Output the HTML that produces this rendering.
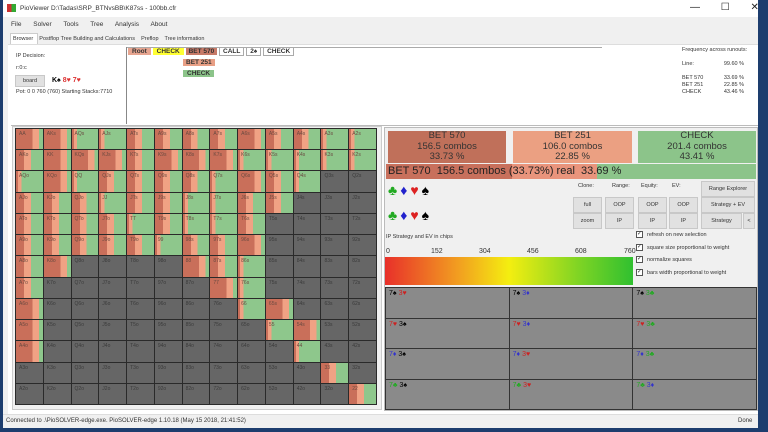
<!DOCTYPE html>
<html><head><meta charset="utf-8"><style>
*{margin:0;padding:0;box-sizing:border-box}
body{width:768px;height:432px;overflow:hidden;background:#1d3d6e;font-family:"Liberation Sans",sans-serif;position:relative}
.a{position:absolute}
#win{left:3px;top:0;width:755px;height:428px;background:#f0f0f0}
.t{font-size:6px;color:#333;white-space:nowrap}
#grid{left:15px;top:128px;width:362px;height:277px;display:grid;grid-template-columns:repeat(13,1fr);grid-template-rows:repeat(13,1fr);background:#2a2a2a;gap:1px;border:1px solid #2a2a2a}
.c{font-size:5px;color:#6a4a40;padding:2px 0 0 3px;overflow:hidden}
.R{background:linear-gradient(90deg,#c96f5a 0 62%,#f0a284 62% 86%,#8ec78c 86%)}
.M{background:linear-gradient(90deg,#c96f5a 0 30%,#f0a284 30% 55%,#8ec78c 55%)}
.G{background:linear-gradient(90deg,#c96f5a 0 8%,#f0a284 8% 20%,#8ec78c 20%)}
.X{background:#666;color:#3a3a3a}
.box{text-align:center;font-size:9.5px;line-height:10.5px;color:#333;padding-top:0}
.btn{background:#e1e1e1;border:1px solid #c8c8c8;font-size:5.5px;color:#333;text-align:center;line-height:14px}
.cb{font-size:5.5px;color:#333;white-space:nowrap}
.cb i{display:inline-block;width:7px;height:7px;border:1px solid #555;background:#fff;vertical-align:middle;margin-right:4px;font-style:normal;font-size:6px;line-height:5px;text-align:center}
.bc{background:#8a8a8a;font-size:7px;padding:2px 0 0 3px}
</style></head><body>
<div id="win" class="a"></div>
<div class="a" style="left:3px;top:0;width:755px;height:17px;background:#fff"></div>
<div class="a" style="left:7px;top:4px;width:9px;height:8px;background:linear-gradient(90deg,#c33 0 50%,#3a3 50%)"></div>
<div class="a t" style="left:20px;top:5px;font-size:6.5px">PioViewer D:\Tadas\SRP_BTNvsBB\K87ss - 100bb.cfr</div>
<div class="a t" style="left:690px;top:2px;font-size:10px;color:#222;word-spacing:18px">&#8212; &#9744; &#10005;</div>
<div class="a t" style="left:11px;top:21px;font-size:6.5px;word-spacing:10px">File Solver Tools Tree Analysis About</div>
<div class="a" style="left:10px;top:33px;width:28px;height:12px;background:#fff;border:1px solid #ccc;border-bottom:none"></div>
<div class="a t" style="left:13px;top:36px;font-size:5.5px">Browser &nbsp;&nbsp; Postflop Tree Building and Calculations &nbsp;&nbsp; Preflop &nbsp;&nbsp; Tree information</div>
<div class="a" style="left:8px;top:44px;width:750px;height:370px;background:#fff;border-top:1px solid #ddd"></div>
<div class="a t" style="left:16px;top:53px;font-size:5.5px">IP Decision:</div>
<div class="a t" style="left:16px;top:65px;font-size:5.5px">r:0:c</div>
<div class="a btn" style="left:15px;top:75px;width:30px;height:12px;line-height:10px">board</div>
<div class="a t" style="left:52px;top:77px;font-size:7px;font-weight:bold;color:#000">K♠ <span style="color:#d33">8♥ 7♥</span></div>
<div class="a t" style="left:16px;top:89px;font-size:5.5px">Pot: 0 0 760 (760) Starting Stacks:7710</div>
<div class="a" style="left:126px;top:47px;width:1px;height:77px;background:#888"></div>
<div class="a" style="left:127px;top:47px;width:475px;height:1px;background:#aaa"></div>
<div class="a t" style="left:128px;top:48px;font-size:6.5px;font-weight:bold">
<span style="background:#e7a590;padding:0 4px">Root</span> <span style="background:#ffff33;padding:0 4px">CHECK</span> <span style="background:#c77a68;padding:0 3px">BET 570</span> <span style="background:#fff;border:1px solid #aaa;padding:0 3px">CALL</span> <span style="border:1px solid #aaa;padding:0 3px">2♠</span> <span style="border:1px solid #aaa;padding:0 3px">CHECK</span></div>
<div class="a t" style="left:183px;top:59px;font-size:6.5px;font-weight:bold;background:#e89f85;padding:0 3px">BET 251</div>
<div class="a t" style="left:183px;top:70px;font-size:6.5px;font-weight:bold;background:#8cc48a;padding:0 4px">CHECK</div>
<div class="a t" style="left:682px;top:47px;font-size:5.5px">Frequency across runouts:</div>
<div class="a t" style="left:682px;top:61px;font-size:5.5px;width:80px">Line:<span style="float:right;margin-right:18px">99.60 %</span></div>
<div class="a t" style="left:682px;top:75px;font-size:5.5px;line-height:7px;width:80px">BET 570<span style="float:right;margin-right:18px">33.69 %</span><br>BET 251<span style="float:right;margin-right:18px">22.85 %</span><br>CHECK<span style="float:right;margin-right:18px">43.46 %</span></div>
<div class="a" style="left:11px;top:125px;width:747px;height:1px;background:#bbb"></div>
<div class="a" style="left:12px;top:126px;width:370px;height:284px;background:#f0f0f0;border:1px solid #ccc"></div>
<div id="grid" class="a">
<div class="c R">AA</div><div class="c R">AKs</div><div class="c G">AQs</div><div class="c G">AJs</div><div class="c M">ATs</div><div class="c M">A9s</div><div class="c M">A8s</div><div class="c M">A7s</div><div class="c R">A6s</div><div class="c M">A5s</div><div class="c M">A4s</div><div class="c G">A3s</div><div class="c G">A2s</div>
<div class="c M">AKo</div><div class="c R">KK</div><div class="c R">KQs</div><div class="c R">KJs</div><div class="c M">KTs</div><div class="c R">K9s</div><div class="c R">K8s</div><div class="c R">K7s</div><div class="c G">K6s</div><div class="c G">K5s</div><div class="c G">K4s</div><div class="c G">K3s</div><div class="c G">K2s</div>
<div class="c G">AQo</div><div class="c R">KQo</div><div class="c G">QQ</div><div class="c M">QJs</div><div class="c M">QTs</div><div class="c M">Q9s</div><div class="c M">Q8s</div><div class="c G">Q7s</div><div class="c R">Q6s</div><div class="c M">Q5s</div><div class="c G">Q4s</div><div class="c X">Q3s</div><div class="c X">Q2s</div>
<div class="c M">AJo</div><div class="c M">KJo</div><div class="c M">QJo</div><div class="c G">JJ</div><div class="c M">JTs</div><div class="c M">J9s</div><div class="c G">J8s</div><div class="c G">J7s</div><div class="c M">J6s</div><div class="c M">J5s</div><div class="c X">J4s</div><div class="c X">J3s</div><div class="c X">J2s</div>
<div class="c M">ATo</div><div class="c M">KTo</div><div class="c M">QTo</div><div class="c M">JTo</div><div class="c G">TT</div><div class="c M">T9s</div><div class="c G">T8s</div><div class="c G">T7s</div><div class="c M">T6s</div><div class="c X">T5s</div><div class="c X">T4s</div><div class="c X">T3s</div><div class="c X">T2s</div>
<div class="c M">A9o</div><div class="c M">K9o</div><div class="c M">Q9o</div><div class="c M">J9o</div><div class="c M">T9o</div><div class="c G">99</div><div class="c M">98s</div><div class="c M">97s</div><div class="c R">96s</div><div class="c X">95s</div><div class="c X">94s</div><div class="c X">93s</div><div class="c X">92s</div>
<div class="c M">A8o</div><div class="c R">K8o</div><div class="c X">Q8o</div><div class="c X">J8o</div><div class="c X">T8o</div><div class="c X">98o</div><div class="c R">88</div><div class="c M">87s</div><div class="c G">86s</div><div class="c X">85s</div><div class="c X">84s</div><div class="c X">83s</div><div class="c X">82s</div>
<div class="c M">A7o</div><div class="c X">K7o</div><div class="c X">Q7o</div><div class="c X">J7o</div><div class="c X">T7o</div><div class="c X">97o</div><div class="c X">87o</div><div class="c R">77</div><div class="c G">76s</div><div class="c X">75s</div><div class="c X">74s</div><div class="c X">73s</div><div class="c X">72s</div>
<div class="c R">A6o</div><div class="c X">K6o</div><div class="c X">Q6o</div><div class="c X">J6o</div><div class="c X">T6o</div><div class="c X">96o</div><div class="c X">86o</div><div class="c X">76o</div><div class="c G">66</div><div class="c R">65s</div><div class="c X">64s</div><div class="c X">63s</div><div class="c X">62s</div>
<div class="c R">A5o</div><div class="c X">K5o</div><div class="c X">Q5o</div><div class="c X">J5o</div><div class="c X">T5o</div><div class="c X">95o</div><div class="c X">85o</div><div class="c X">75o</div><div class="c X">65o</div><div class="c G">55</div><div class="c R">54s</div><div class="c X">53s</div><div class="c X">52s</div>
<div class="c R">A4o</div><div class="c X">K4o</div><div class="c X">Q4o</div><div class="c X">J4o</div><div class="c X">T4o</div><div class="c X">94o</div><div class="c X">84o</div><div class="c X">74o</div><div class="c X">64o</div><div class="c X">54o</div><div class="c G">44</div><div class="c X">43s</div><div class="c X">42s</div>
<div class="c X">A3o</div><div class="c X">K3o</div><div class="c X">Q3o</div><div class="c X">J3o</div><div class="c X">T3o</div><div class="c X">93o</div><div class="c X">83o</div><div class="c X">73o</div><div class="c X">63o</div><div class="c X">53o</div><div class="c X">43o</div><div class="c M">33</div><div class="c X">32s</div>
<div class="c X">A2o</div><div class="c X">K2o</div><div class="c X">Q2o</div><div class="c X">J2o</div><div class="c X">T2o</div><div class="c X">92o</div><div class="c X">82o</div><div class="c X">72o</div><div class="c X">62o</div><div class="c X">52o</div><div class="c X">42o</div><div class="c X">32o</div><div class="c M">22</div>
</div>
<div class="a" style="left:384px;top:127px;width:374px;height:284px;background:#f0f0f0;border:1px solid #bbb"></div>
<div class="a box" style="left:388px;top:131px;width:118px;height:32px;background:#c0705a">BET 570<br>156.5 combos<br>33.73 %</div>
<div class="a box" style="left:513px;top:131px;width:119px;height:32px;background:#eba082">BET 251<br>106.0 combos<br>22.85 %</div>
<div class="a box" style="left:638px;top:131px;width:118px;height:32px;background:#8cc48a">CHECK<br>201.4 combos<br>43.41 %</div>
<div class="a" style="left:386px;top:164px;width:370px;height:15px;background:linear-gradient(90deg,#c8705c 0 34%,#e9947c 34% 57%,#8cc48a 57%)"></div>
<div class="a t" style="left:388px;top:165px;font-size:11px;color:#222">BET 570 &nbsp;156.5 combos (33.73%) real &nbsp;33.69 %</div>
<div class="a t" style="left:388px;top:182px;font-size:14px;letter-spacing:3px"><span style="color:#2a2">♣</span><span style="color:#22c">♦</span><span style="color:#d22">♥</span><span style="color:#000">♠</span></div>
<div class="a t" style="left:388px;top:207px;font-size:14px;letter-spacing:3px"><span style="color:#2a2">♣</span><span style="color:#22c">♦</span><span style="color:#d22">♥</span><span style="color:#000">♠</span></div>
<div class="a t" style="left:578px;top:183px;font-size:5.5px">Clone:</div>
<div class="a t" style="left:612px;top:183px;font-size:5.5px">Range:</div>
<div class="a t" style="left:641px;top:183px;font-size:5.5px">Equity:</div>
<div class="a t" style="left:672px;top:183px;font-size:5.5px">EV:</div>
<div class="a btn" style="left:573px;top:197px;width:29px;height:16px">full</div>
<div class="a btn" style="left:605px;top:197px;width:29px;height:16px">OOP</div>
<div class="a btn" style="left:638px;top:197px;width:29px;height:16px">OOP</div>
<div class="a btn" style="left:669px;top:197px;width:29px;height:16px">OOP</div>
<div class="a btn" style="left:573px;top:213px;width:29px;height:16px">zoom</div>
<div class="a btn" style="left:605px;top:213px;width:29px;height:16px">IP</div>
<div class="a btn" style="left:638px;top:213px;width:29px;height:16px">IP</div>
<div class="a btn" style="left:669px;top:213px;width:29px;height:16px">IP</div>
<div class="a btn" style="left:701px;top:181px;width:54px;height:16px">Range Explorer</div>
<div class="a btn" style="left:701px;top:197px;width:54px;height:16px">Strategy + EV</div>
<div class="a btn" style="left:701px;top:213px;width:41px;height:16px">Strategy</div>
<div class="a btn" style="left:743px;top:213px;width:12px;height:16px">&lt;</div>
<div class="a t" style="left:386px;top:234px;font-size:5.5px">IP Strategy and EV in chips</div>
<div class="a t" style="left:386px;top:248px;font-size:7px;width:250px"><span class="a" style="left:0">0</span><span class="a" style="left:45px">152</span><span class="a" style="left:93px">304</span><span class="a" style="left:141px">456</span><span class="a" style="left:189px">608</span><span class="a" style="left:238px">760</span></div>
<div class="a" style="left:385px;top:257px;width:248px;height:28px;background:linear-gradient(90deg,#e8302a,#f2a020 30%,#f4ee10 50%,#7fd424 78%,#30c030)"></div>
<div class="a cb" style="left:636px;top:231px"><i>✓</i>refresh on new selection</div>
<div class="a cb" style="left:636px;top:244px"><i>✓</i>square size proportional to weight</div>
<div class="a cb" style="left:636px;top:256px"><i>✓</i>normalize squares</div>
<div class="a cb" style="left:636px;top:269px"><i>✓</i>bars width proportional to weight</div>
<div class="a" style="left:385px;top:287px;width:372px;height:123px;background:#333;display:grid;grid-template-columns:repeat(3,1fr);grid-template-rows:repeat(4,1fr);gap:1px;border:1px solid #333">
<div class="bc">7♠ <span style="color:#c22">3♥</span></div><div class="bc">7♠ <span style="color:#33c">3♦</span></div><div class="bc">7♠ <span style="color:#2a2">3♣</span></div>
<div class="bc"><span style="color:#c22">7♥</span> 3♠</div><div class="bc"><span style="color:#c22">7♥</span> <span style="color:#33c">3♦</span></div><div class="bc"><span style="color:#c22">7♥</span> <span style="color:#2a2">3♣</span></div>
<div class="bc"><span style="color:#33c">7♦</span> 3♠</div><div class="bc"><span style="color:#33c">7♦</span> <span style="color:#c22">3♥</span></div><div class="bc"><span style="color:#33c">7♦</span> <span style="color:#2a2">3♣</span></div>
<div class="bc"><span style="color:#2a2">7♣</span> 3♠</div><div class="bc"><span style="color:#2a2">7♣</span> <span style="color:#c22">3♥</span></div><div class="bc"><span style="color:#2a2">7♣</span> <span style="color:#33c">3♦</span></div>
</div>
<div class="a" style="left:3px;top:414px;width:755px;height:14px;background:#f0f0f0;border-top:1px solid #ddd"></div>
<div class="a t" style="left:6px;top:418px;font-size:6px">Connected to .\PioSOLVER-edge.exe. PioSOLVER-edge 1.10.18 (May 15 2018, 21:41:52)</div>
<div class="a t" style="left:738px;top:418px;font-size:6px">Done</div>
</body></html>
